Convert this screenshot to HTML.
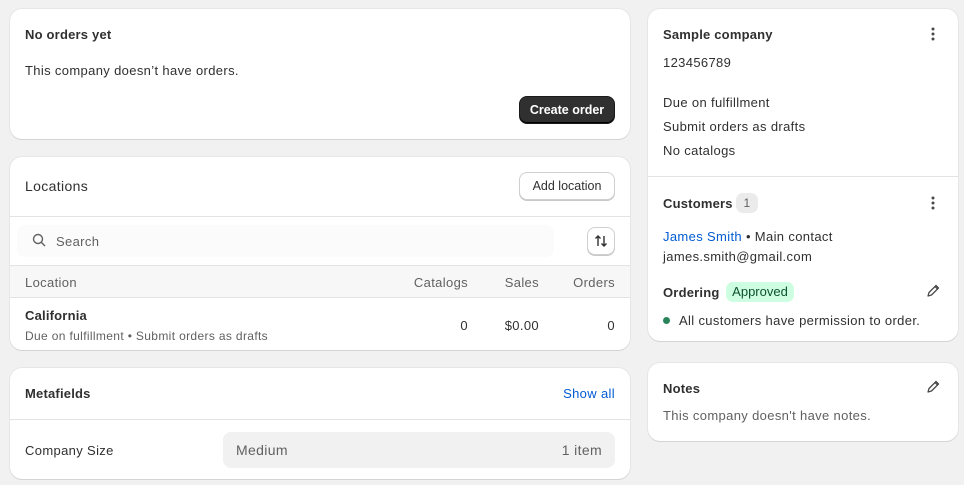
<!DOCTYPE html>
<html><head><style>
*{box-sizing:border-box;margin:0;padding:0}
body{width:964px;height:485px;background:#f1f1f1;font-family:"Liberation Sans",sans-serif;font-size:13px;letter-spacing:.35px;color:#303030;position:relative;overflow:hidden}
.card{position:absolute;background:#fff;border-radius:12px;box-shadow:0 1px 0 #d4d4d4,0 0 0 1px #e6e6e6;overflow:hidden}
.a{position:absolute;white-space:nowrap}
.b{font-weight:bold;color:#303030;letter-spacing:.2px}
.hr{position:absolute;left:0;right:0;height:1px;background:#e3e3e3}
.btn{position:absolute;border:1px solid #d0d0d0;border-radius:8px;box-shadow:0 1px 0 #c8c8c8;font-size:12.5px;display:flex;align-items:center;justify-content:center;background:#fff;letter-spacing:0}
.g{color:#616161}
</style></head><body>

<div class="card" style="left:10px;top:9px;width:620px;height:130px">
 <div class="a b" style="left:15px;top:18px">No orders yet</div>
 <div class="a" style="left:15px;top:54px">This company doesn’t have orders.</div>
 <div class="btn" style="left:509px;top:87px;width:96px;height:28px;background:#303030;color:#fff;font-weight:bold;border-color:#1a1a1a;box-shadow:inset 0 -1px 0 #000">Create order</div>
</div>

<div class="card" style="left:10px;top:157px;width:620px;height:193px">
 <div class="a" style="left:15px;top:21px;font-size:14px">Locations</div>
 <div class="btn" style="left:509px;top:15px;width:96px;height:28px">Add location</div>
 <div class="hr" style="top:59px"></div>
 <div class="a" style="left:7px;top:68px;width:537px;height:32px;background:#fbfbfb;border-radius:8px"></div>
 <svg class="a" style="left:22px;top:76px" width="15" height="15" viewBox="0 0 15 15"><circle cx="6" cy="6" r="4.5" fill="none" stroke="#616161" stroke-width="1.4"/><path d="M9.5 9.5L13 13" stroke="#616161" stroke-width="1.4"/></svg>
 <div class="a g" style="left:46px;top:77px">Search</div>
 <div class="btn" style="left:577px;top:70px;width:28px;height:28px"><svg width="14" height="14" viewBox="0 0 14 14"><path d="M4 12V2M1.5 4.5L4 2l2.5 2.5M10 2v10M7.5 9.5L10 12l2.5-2.5" stroke="#303030" stroke-width="1.4" fill="none"/></svg></div>
 <div class="a" style="left:0;top:108px;width:620px;height:33px;background:#f7f7f7;border-top:1px solid #e3e3e3;border-bottom:1px solid #e3e3e3"></div>
 <div class="a g" style="left:15px;top:118px">Location</div>
 <div class="a g" style="right:162px;top:118px">Catalogs</div>
 <div class="a g" style="right:91px;top:118px">Sales</div>
 <div class="a g" style="right:15px;top:118px">Orders</div>
 <div class="a b" style="left:15px;top:151px">California</div>
 <div class="a g" style="left:15px;top:172px;font-size:12px">Due on fulfillment • Submit orders as drafts</div>
 <div class="a" style="right:162px;top:161px">0</div>
 <div class="a" style="right:91px;top:161px">$0.00</div>
 <div class="a" style="right:15px;top:161px">0</div>
</div>

<div class="card" style="left:10px;top:368px;width:620px;height:111px">
 <div class="a b" style="left:15px;top:18px">Metafields</div>
 <div class="a" style="right:15px;top:18px;color:#005bd3">Show all</div>
 <div class="hr" style="top:51px"></div>
 <div class="a" style="left:15px;top:75px">Company Size</div>
 <div class="a" style="left:213px;top:64px;width:392px;height:36px;background:#f1f1f1;border-radius:8px;font-size:14px;color:#616161"><span class="a" style="left:13px;top:10px">Medium</span><span class="a" style="right:13px;top:10px">1 item</span></div>
</div>

<div class="card" style="left:648px;top:9px;width:310px;height:332px">
 <div class="a b" style="left:15px;top:18px">Sample company</div>
 <svg class="a" style="left:282px;top:17px" width="6" height="16"><circle cx="3" cy="3" r="1.5" fill="#4a4a4a"/><circle cx="3" cy="8" r="1.5" fill="#4a4a4a"/><circle cx="3" cy="13" r="1.5" fill="#4a4a4a"/></svg>
 <div class="a" style="left:15px;top:46px">123456789</div>
 <div class="a" style="left:15px;top:86px">Due on fulfillment</div>
 <div class="a" style="left:15px;top:110px">Submit orders as drafts</div>
 <div class="a" style="left:15px;top:134px">No catalogs</div>
 <div class="hr" style="top:167px"></div>
 <div class="a b" style="left:15px;top:187px">Customers</div>
 <div class="a" style="left:88px;top:184px;width:22px;height:20px;background:#ebebeb;border-radius:7px;text-align:center;line-height:20px;font-size:12px;color:#616161">1</div>
 <svg class="a" style="left:282px;top:186px" width="6" height="16"><circle cx="3" cy="3" r="1.5" fill="#4a4a4a"/><circle cx="3" cy="8" r="1.5" fill="#4a4a4a"/><circle cx="3" cy="13" r="1.5" fill="#4a4a4a"/></svg>
 <div class="a" style="left:15px;top:220px"><span style="color:#005bd3">James Smith</span> • Main contact</div>
 <div class="a" style="left:15px;top:240px">james.smith@gmail.com</div>
 <div class="a b" style="left:15px;top:276px">Ordering</div>
 <div class="a" style="left:78px;top:273px;width:68px;height:20px;background:#cdfee1;border-radius:7px;text-align:center;line-height:20px;color:#0c5132;letter-spacing:0">Approved</div>
 <svg class="a" style="left:277px;top:274px" width="16" height="16" viewBox="0 0 16 16"><path d="M3 13l1-3.5 7-7 2.5 2.5-7 7zM10 3.5l2.5 2.5" fill="none" stroke="#4a4a4a" stroke-width="1.3" stroke-linejoin="round"/></svg>
 <div class="a" style="left:15px;top:308px;width:7px;height:7px;border-radius:50%;background:#29845a"></div>
 <div class="a" style="left:31px;top:304px">All customers have permission to order.</div>
</div>

<div class="card" style="left:648px;top:363px;width:310px;height:78px">
 <div class="a b" style="left:15px;top:18px">Notes</div>
 <svg class="a" style="left:277px;top:16px" width="16" height="16" viewBox="0 0 16 16"><path d="M3 13l1-3.5 7-7 2.5 2.5-7 7zM10 3.5l2.5 2.5" fill="none" stroke="#4a4a4a" stroke-width="1.3" stroke-linejoin="round"/></svg>
 <div class="a g" style="left:15px;top:45px">This company doesn't have notes.</div>
</div>
</body></html>
